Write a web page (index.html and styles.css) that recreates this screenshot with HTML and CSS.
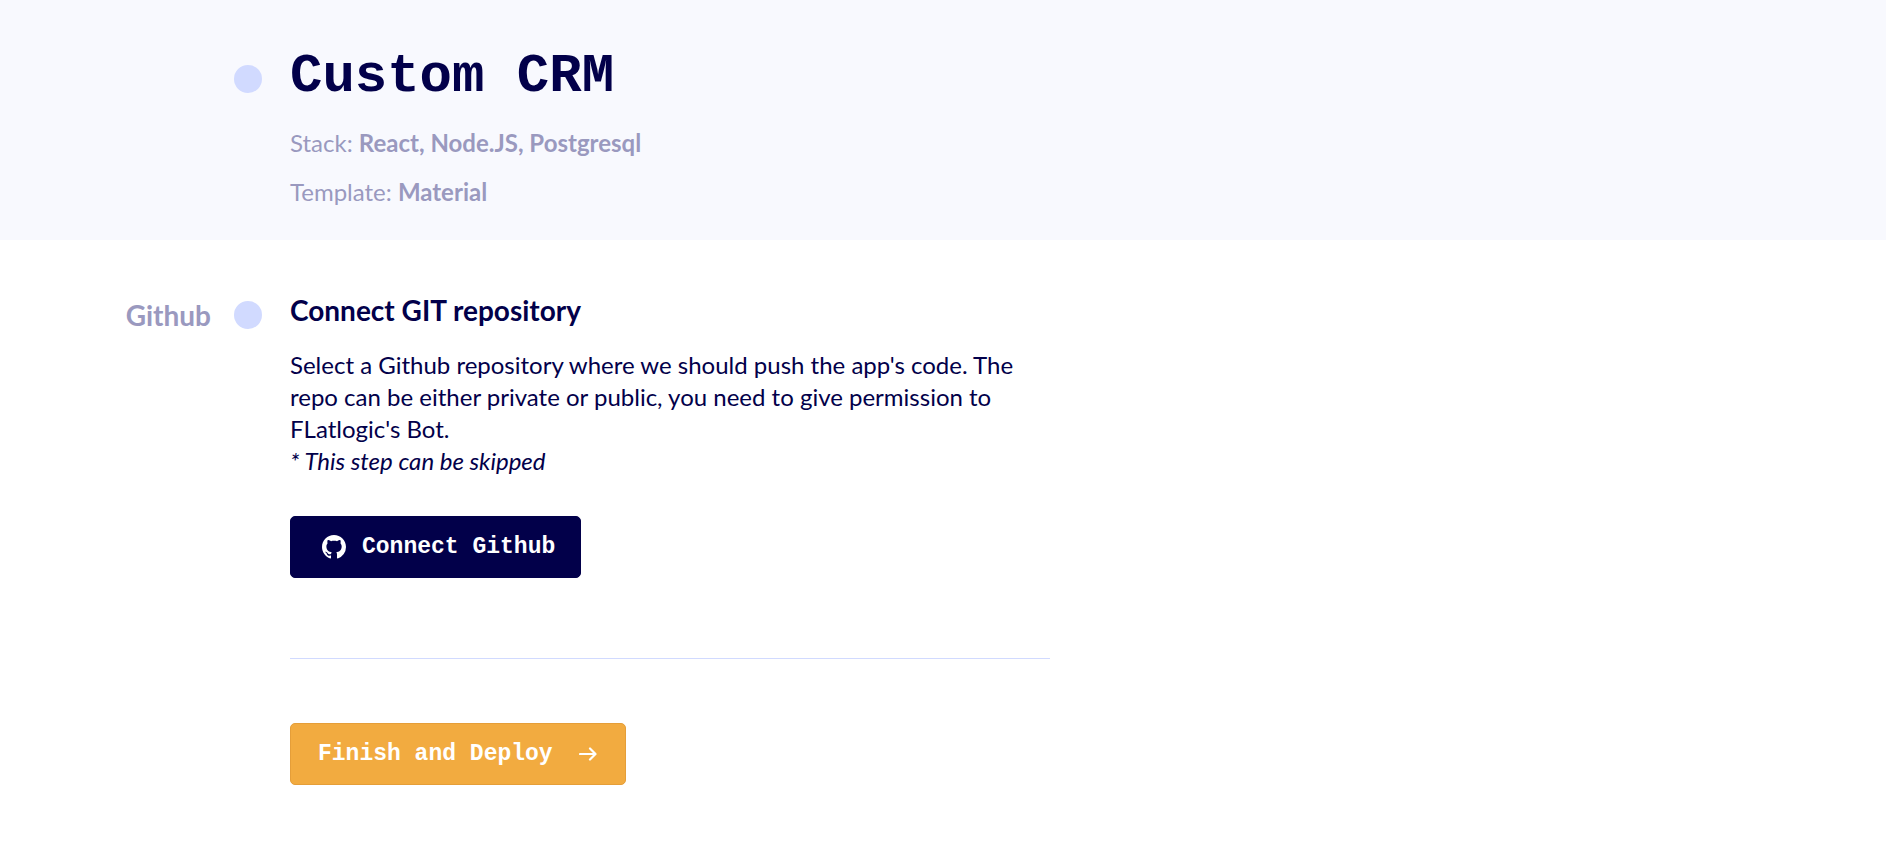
FILE: index.html
```html
<!DOCTYPE html>
<html lang="en">
<head>
<meta charset="utf-8">
<meta name="viewport" content="width=device-width, initial-scale=1">
<title>Custom CRM</title>
<link rel="stylesheet" href="styles.css">
</head>
<body>
<header class="step step-header">
  <span class="dot"></span>
  <div class="content">
    <h1 class="title">Custom CRM</h1>
    <p class="meta">Stack: <strong>React, Node.JS, Postgresql</strong></p>
    <p class="meta">Template: <strong>Material</strong></p>
  </div>
</header>
<main class="step">
  <span class="label">Github</span>
  <span class="dot"></span>
  <div class="content">
    <h2 class="subtitle">Connect GIT repository</h2>
    <p class="text">Select a Github repository where we should push the app's code. The repo can be either private or public, you need to give permission to FLatlogic's Bot.<br><em>* This step can be skipped</em></p>
    <button class="button button-github" type="button">
      <svg class="icon-github" viewBox="0 0 16 16" aria-hidden="true"><path fill="currentColor" d="M8 0C3.58 0 0 3.58 0 8c0 3.54 2.29 6.53 5.47 7.59.4.07.55-.17.55-.38 0-.19-.01-.82-.01-1.49-2.01.37-2.53-.49-2.69-.94-.09-.23-.48-.94-.82-1.13-.28-.15-.68-.52-.01-.53.63-.01 1.08.58 1.23.82.72 1.21 1.87.87 2.33.66.07-.52.28-.87.51-1.07-1.78-.2-3.64-.89-3.64-3.95 0-.87.31-1.59.82-2.15-.08-.2-.36-1.02.08-2.12 0 0 .67-.21 2.2.82.64-.18 1.32-.27 2-.27s1.36.09 2 .27c1.53-1.04 2.2-.82 2.2-.82.44 1.1.16 1.92.08 2.12.51.56.82 1.27.82 2.15 0 3.07-1.87 3.75-3.65 3.95.29.25.54.73.54 1.48 0 1.07-.01 1.93-.01 2.2 0 .21.15.46.55.38A8.01 8.01 0 0 0 16 8c0-4.42-3.58-8-8-8z"/></svg>
      <span>Connect Github</span>
    </button>
    <hr class="divider">
    <button class="button button-deploy" type="button">
      <span>Finish and Deploy</span>
      <svg class="icon-arrow" viewBox="0 0 18 14" aria-hidden="true"><path d="M1 7h15M11 1.5 16.5 7 11 12.5" fill="none" stroke="currentColor" stroke-width="2.2" stroke-linecap="round" stroke-linejoin="round"/></svg>
    </button>
  </div>
</main>
</body>
</html>
```
FILE: styles.css
```css
* {
  box-sizing: border-box;
}

body {
  margin: 0;
  background: #fff;
  color: #02004a;
  font-family: Lato, "Open Sans", sans-serif;
  font-size: 24px;
  line-height: 32px;
}

h1, h2, p {
  margin: 0;
}

.step {
  display: grid;
  grid-template-columns: 211px 51px minmax(0, 788px);
  align-items: start;
  padding: 54px 24px 40px 0;
}

.step-header {
  padding: 43px 24px 32px 0;
  background: #f8f9fe;
}

.label {
  grid-column: 1;
  margin-top: 5px;
  color: #9a99bf;
  font-size: 28px;
  font-weight: 700;
  text-align: right;
}

.dot {
  grid-column: 2;
  justify-self: end;
  width: 28px;
  height: 28px;
  margin-top: 7px;
  border-radius: 50%;
  background: #d1daff;
}

.step-header .dot {
  margin-top: 22px;
}

.content {
  grid-column: 3;
  padding-left: 28px;
}

.title {
  margin-bottom: 16px;
  font-family: "Liberation Mono", monospace;
  font-size: 54px;
  font-weight: 700;
  line-height: 68px;
}

.meta {
  color: #9a99bf;
}

.meta + .meta {
  margin-top: 17px;
}

.subtitle {
  margin-bottom: 23px;
  font-size: 28px;
  font-weight: 700;
}

.text {
  margin-bottom: 39px;
}

.button {
  display: flex;
  align-items: center;
  height: 62px;
  padding: 0 25px 0 27px;
  border: 1px solid #02004a;
  border-radius: 5px;
  background: #02004a;
  color: #fff;
  font-family: "Liberation Mono", monospace;
  font-size: 23px;
  font-weight: 700;
  line-height: 30px;
  cursor: pointer;
}

.button-github {
  gap: 16px;
  padding-left: 31px;
}

.button-deploy {
  gap: 26px;
  padding-right: 28px;
  border-color: #e59e39;
  background: #f2ab40;
}

.icon-github {
  width: 24px;
  height: 24px;
}

.icon-arrow {
  width: 18px;
  height: 14px;
}

.divider {
  height: 1px;
  margin: 80px 0 64px;
  border: 0;
  background: #d1daff;
}
```
